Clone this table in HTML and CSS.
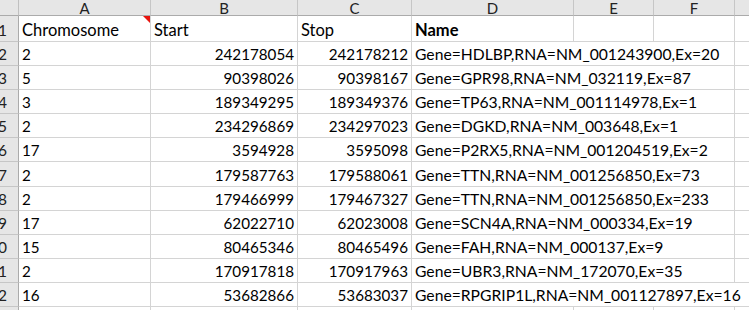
FILE: index.html
```html
<!DOCTYPE html>
<html>
<head>
<meta charset="utf-8">
<link rel="stylesheet" href="styles.css">
</head>
<body>
<div class="sheet">
  <div class="corner"></div>
  <div class="colhead">A</div>
  <div class="colhead">B</div>
  <div class="colhead">C</div>
  <div class="colhead">D</div>
  <div class="colhead">E</div>
  <div class="colhead">F</div>
  <div class="colhead"></div>

  <div class="rowhead"><span>1</span></div>
  <div class="cell word">Chromosome<span class="note"></span></div>
  <div class="cell word">Start</div>
  <div class="cell word">Stop</div>
  <div class="cell word bold">Name</div>
  <div class="cell"></div>
  <div class="cell"></div>
  <div class="cell"></div>

  <div class="rowhead"><span>2</span></div>
  <div class="cell">2</div><div class="cell num">242178054</div><div class="cell num">242178212</div><div class="cell gene">Gene=HDLBP,RNA=NM_001243900,Ex=20</div><div class="cell"></div>

  <div class="rowhead"><span>3</span></div>
  <div class="cell">5</div><div class="cell num">90398026</div><div class="cell num">90398167</div><div class="cell gene">Gene=GPR98,RNA=NM_032119,Ex=87</div><div class="cell"></div>

  <div class="rowhead"><span>4</span></div>
  <div class="cell">3</div><div class="cell num">189349295</div><div class="cell num">189349376</div><div class="cell gene">Gene=TP63,RNA=NM_001114978,Ex=1</div><div class="cell"></div>

  <div class="rowhead"><span>5</span></div>
  <div class="cell">2</div><div class="cell num">234296869</div><div class="cell num">234297023</div><div class="cell gene">Gene=DGKD,RNA=NM_003648,Ex=1</div><div class="cell"></div>

  <div class="rowhead"><span>6</span></div>
  <div class="cell">17</div><div class="cell num">3594928</div><div class="cell num">3595098</div><div class="cell gene">Gene=P2RX5,RNA=NM_001204519,Ex=2</div><div class="cell"></div>

  <div class="rowhead"><span>7</span></div>
  <div class="cell">2</div><div class="cell num">179587763</div><div class="cell num">179588061</div><div class="cell gene">Gene=TTN,RNA=NM_001256850,Ex=73</div><div class="cell"></div>

  <div class="rowhead"><span>8</span></div>
  <div class="cell">2</div><div class="cell num">179466999</div><div class="cell num">179467327</div><div class="cell gene">Gene=TTN,RNA=NM_001256850,Ex=233</div><div class="cell"></div>

  <div class="rowhead"><span>9</span></div>
  <div class="cell">17</div><div class="cell num">62022710</div><div class="cell num">62023008</div><div class="cell gene">Gene=SCN4A,RNA=NM_000334,Ex=19</div><div class="cell"></div>

  <div class="rowhead"><span>10</span></div>
  <div class="cell">15</div><div class="cell num">80465346</div><div class="cell num">80465496</div><div class="cell gene">Gene=FAH,RNA=NM_000137,Ex=9</div><div class="cell"></div>

  <div class="rowhead"><span>11</span></div>
  <div class="cell">2</div><div class="cell num">170917818</div><div class="cell num">170917963</div><div class="cell gene">Gene=UBR3,RNA=NM_172070,Ex=35</div><div class="cell"></div>

  <div class="rowhead"><span>12</span></div>
  <div class="cell">16</div><div class="cell num">53682866</div><div class="cell num">53683037</div><div class="cell gene wide">Gene=RPGRIP1L,RNA=NM_001127897,Ex=16</div>

  <div class="rowhead"><span>13</span></div>
  <div class="cell"></div><div class="cell"></div><div class="cell"></div><div class="cell"></div><div class="cell"></div><div class="cell"></div><div class="cell"></div>
</div>
</body>
</html>
```

FILE: styles.css
```css
html, body {
  margin: 0;
  padding: 0;
  background: #ffffff;
  overflow: hidden;
}

.sheet {
  display: grid;
  grid-template-columns: 19px 132px 147px 114px 162px 80px 81px 40px;
  grid-template-rows: 16px 26px repeat(12, 24.1px);
  width: 775px;
  height: 310px;
  overflow: hidden;
  font-family: Lato, "Liberation Sans", sans-serif;
  font-size: 15.2px;
  color: #000000;
}

.corner {
  background: #e6e6e6;
  border-right: 1px solid #c0c0c0;
  border-bottom: 1px solid #ababab;
  box-sizing: border-box;
}

.colhead {
  background: #e6e6e6;
  border-right: 1px solid #c6c6c6;
  border-bottom: 1px solid #ababab;
  box-sizing: border-box;
  display: flex;
  align-items: center;
  justify-content: center;
  font-size: 15px;
  line-height: 14px;
  color: #222222;
  padding-top: 1px;
}

.rowhead {
  background: #e6e6e6;
  border-right: 1px solid #ababab;
  border-bottom: 1px solid #c6c6c6;
  box-sizing: border-box;
  display: flex;
  align-items: flex-end;
  justify-content: flex-end;
  padding: 0 11px 3px 0;
  font-size: 15.5px;
  line-height: 15px;
  color: #222222;
  overflow: hidden;
  white-space: nowrap;
}

.cell {
  border-right: 1px solid #d4d4d4;
  border-bottom: 1px solid #d4d4d4;
  box-sizing: border-box;
  display: flex;
  align-items: flex-end;
  padding: 0 3px 3px 3px;
  line-height: 15px;
  white-space: nowrap;
  position: relative;
  min-width: 0;
}

.cell.word {
  font-size: 16.5px;
}

.cell.num {
  justify-content: flex-end;
}

.cell.gene {
  grid-column: span 3;
  font-size: 15.7px;
}

.cell.gene.wide {
  grid-column: span 4;
}

.cell.bold {
  font-weight: 700;
}

.note {
  position: absolute;
  top: 0;
  right: 0;
  width: 0;
  height: 0;
  border-top: 7px solid #e8150f;
  border-left: 7px solid transparent;
}
```
